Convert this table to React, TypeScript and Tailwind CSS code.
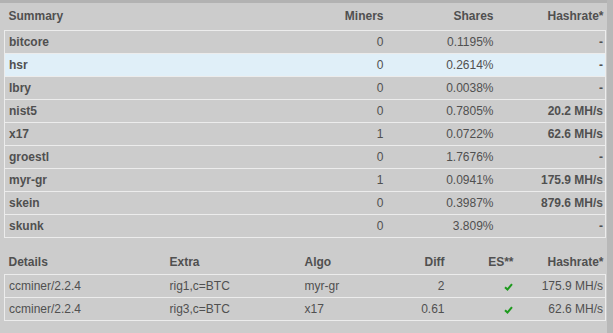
const summary = [
  { algo: 'bitcore', miners: 0, shares: '0.1195%', rate: '-' },
  { algo: 'hsr', miners: 0, shares: '0.2614%', rate: '-', hover: true },
  { algo: 'lbry', miners: 0, shares: '0.0038%', rate: '-' },
  { algo: 'nist5', miners: 0, shares: '0.7805%', rate: '20.2 MH/s' },
  { algo: 'x17', miners: 1, shares: '0.0722%', rate: '62.6 MH/s' },
  { algo: 'groestl', miners: 0, shares: '1.7676%', rate: '-' },
  { algo: 'myr-gr', miners: 1, shares: '0.0941%', rate: '175.9 MH/s' },
  { algo: 'skein', miners: 0, shares: '0.3987%', rate: '879.6 MH/s' },
  { algo: 'skunk', miners: 0, shares: '3.809%', rate: '-' },
]

const details = [
  { client: 'ccminer/2.2.4', extra: 'rig1,c=BTC', algo: 'myr-gr', diff: '2', rate: '175.9 MH/s' },
  { client: 'ccminer/2.2.4', extra: 'rig3,c=BTC', algo: 'x17', diff: '0.61', rate: '62.6 MH/s' },
]

function Check() {
  return (
    <svg width="9" height="8" viewBox="0 0 9 8" className="inline-block">
      <path d="M1 4.2 L3.5 6.5 L8 1.2" fill="none" stroke="#1d9a1d" strokeWidth="2" />
    </svg>
  )
}

export default function App() {
  return (
    <div className="flex h-[333px] w-[613px] bg-[#cccccc] text-[12px] text-[#505050] [font-family:'Liberation_Sans',Arial,sans-serif]">
      <div className="flex-1 flex flex-col">
        <div className="h-[3px] bg-[#b2b2b2]" />
        <div className="pl-[4px] pr-[1px]">
          {/* Summary */}
          <table className="w-[602px] border-collapse table-fixed">
            <thead>
              <tr className="h-[27px] font-bold">
                <th className="text-left pl-[4px] w-[250px]">Summary</th>
                <th className="text-right w-[129px]">Miners</th>
                <th className="text-right w-[110px]">Shares</th>
                <th className="text-right pr-[2px]">Hashrate*</th>
              </tr>
            </thead>
            <tbody>
              {summary.map(r => (
                <tr key={r.algo} className={`h-[23px] border border-[#ececec] ${r.hover ? 'bg-[#e0eff8]' : ''}`}>
                  <td className="pl-[4px] font-bold">{r.algo}</td>
                  <td className="text-right">{r.miners}</td>
                  <td className="text-right">{r.shares}</td>
                  <td className="text-right pr-[2px] font-bold">{r.rate}</td>
                </tr>
              ))}
            </tbody>
          </table>

          {/* Details */}
          <table className="mt-[13px] w-[602px] border-collapse table-fixed">
            <thead>
              <tr className="h-[24px] font-bold">
                <th className="text-left pl-[4px] w-[162px]">Details</th>
                <th className="text-left pl-[3px] w-[135px]">Extra</th>
                <th className="text-left pl-[3px] w-[80px]">Algo</th>
                <th className="text-right w-[63px]">Diff</th>
                <th className="text-right w-[69px]">ES**</th>
                <th className="text-right pr-[2px]">Hashrate*</th>
              </tr>
            </thead>
            <tbody>
              {details.map(d => (
                <tr key={d.extra} className="h-[23px] border border-[#ececec]">
                  <td className="pl-[4px]">{d.client}</td>
                  <td className="pl-[3px]">{d.extra}</td>
                  <td className="pl-[3px]">{d.algo}</td>
                  <td className="text-right">{d.diff}</td>
                  <td className="text-right pr-[1px]"><Check /></td>
                  <td className="text-right pr-[2px]">{d.rate}</td>
                </tr>
              ))}
            </tbody>
          </table>
        </div>
      </div>
      <div className="w-[6px] bg-[#b8b8b8]" />
    </div>
  )
}
